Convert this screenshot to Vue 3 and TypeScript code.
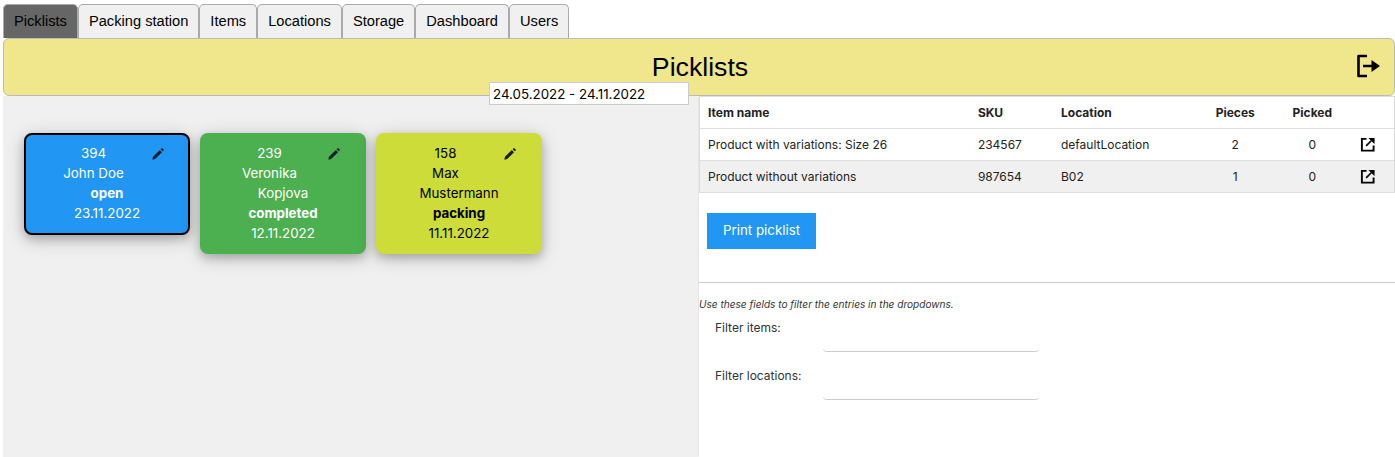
<script setup lang="ts">
interface Card {
  id: number
  name: string
  status: string
  date: string
  color: string
  active?: boolean
}

interface Row {
  name: string
  sku: string
  location: string
  pieces: number
  picked: number
}

const tabs = ['Picklists', 'Packing station', 'Items', 'Locations', 'Storage', 'Dashboard', 'Users']

const dateRange = '24.05.2022 - 24.11.2022'

const cards: Card[] = [
  { id: 394, name: 'John Doe', status: 'open', date: '23.11.2022', color: 'blue', active: true },
  { id: 239, name: 'Veronika Kopjova', status: 'completed', date: '12.11.2022', color: 'green' },
  { id: 158, name: 'Max Mustermann', status: 'packing', date: '11.11.2022', color: 'lime' }
]

const rows: Row[] = [
  { name: 'Product with variations: Size 26', sku: '234567', location: 'defaultLocation', pieces: 2, picked: 0 },
  { name: 'Product without variations', sku: '987654', location: 'B02', pieces: 1, picked: 0 }
]
</script>

<template>
  <div class="page">
    <!-- Tabs -->
    <div class="tabs">
      <button v-for="(tab, i) in tabs" :key="tab" class="tab" :class="{ selected: i === 0 }">{{ tab }}</button>
    </div>

    <!-- Header -->
    <div class="header">
      <h1>Picklists</h1>
      <svg class="logout" viewBox="0 0 24 24" width="24" height="24">
        <path d="M11 2H2.5V22H11" fill="none" stroke="#000" stroke-width="2.6" stroke-linejoin="round" />
        <path d="M7 10.7H15.5V6L24 12L15.5 18V13.3H7Z" fill="#000" />
      </svg>
    </div>

    <div class="main">
      <!-- Picklist cards -->
      <div class="left">
        <input class="range" type="text" :value="dateRange" />
        <div class="cards">
          <div v-for="c in cards" :key="c.id" class="card" :class="[c.color, { active: c.active }]">
            <span class="edit">
              <svg viewBox="0 0 24 24" width="16" height="16">
                <path d="M3.5 20.5l1-4.2L14.8 6l3.2 3.2L7.7 19.5zM16 4.8l1.3-1.3c.4-.4 1-.4 1.4 0l1.8 1.8c.4.4.4 1 0 1.4L19.2 8z" fill="#14202b" />
              </svg>
            </span>
            <div>{{ c.id }}</div>
            <div>{{ c.name }}</div>
            <div class="status">{{ c.status }}</div>
            <div>{{ c.date }}</div>
          </div>
        </div>
      </div>

      <!-- Detail panel -->
      <div class="right">
        <table class="items">
          <thead>
            <tr>
              <th class="col-name">Item name</th>
              <th class="col-sku">SKU</th>
              <th class="col-loc">Location</th>
              <th class="col-num">Pieces</th>
              <th class="col-num2">Picked</th>
              <th class="col-open"></th>
            </tr>
          </thead>
          <tbody>
            <tr v-for="r in rows" :key="r.sku">
              <td>{{ r.name }}</td>
              <td>{{ r.sku }}</td>
              <td>{{ r.location }}</td>
              <td class="center">{{ r.pieces }}</td>
              <td class="center">{{ r.picked }}</td>
              <td class="center">
                <svg class="open" viewBox="0 0 16 16" width="15" height="15">
                  <path d="M7 2H2V14.5H14.5V9" fill="none" stroke="#000" stroke-width="2" />
                  <path d="M6.5 9.5L12 4" fill="none" stroke="#000" stroke-width="1.8" />
                  <path d="M9 1H15.5V7.5Z" fill="#000" />
                </svg>
              </td>
            </tr>
          </tbody>
        </table>

        <button class="print">Print picklist</button>
        <hr />

        <p class="hint">Use these fields to filter the entries in the dropdowns.</p>
        <div class="filter">
          <label>Filter items:</label>
          <input type="text" />
        </div>
        <div class="filter">
          <label>Filter locations:</label>
          <input type="text" />
        </div>
      </div>
    </div>
  </div>
</template>

<style>
html,
body {
  margin: 0;
  background: #fff;
  overflow: hidden;
}
</style>

<style scoped>
.page {
  height: 457px;
  overflow: hidden;
  font-family: Inter, "Liberation Sans", sans-serif;
}

/* Tabs */
.tabs {
  display: flex;
  height: 34px;
  margin-top: 4px;
  padding-left: 3px;
}

.tab {
  padding: 0 10px 2px;
  font-family: "Liberation Sans", Arial, sans-serif;
  font-size: 14.67px;
  color: #000;
  background: #f0f0f0;
  border: 1px solid #aaa;
  border-bottom: none;
  border-radius: 5px 5px 0 0;
}

.tab.selected {
  background: #666;
}

/* Header */
.header {
  display: flex;
  justify-content: center;
  align-items: center;
  position: relative;
  box-sizing: border-box;
  height: 58px;
  margin-left: 3px;
  padding-left: 2px;
  background: #f0e68c;
  border: 1px solid #bbb;
  border-radius: 6px;
}

.header h1 {
  margin: 0;
  font-family: "Liberation Sans", Arial, sans-serif;
  font-size: 26.67px;
  font-weight: 400;
  color: #000;
}

.logout {
  position: absolute;
  top: 15px;
  right: 14px;
}

/* Main */
.main {
  display: flex;
  height: 361px;
}

.left {
  position: relative;
  box-sizing: border-box;
  width: 695px;
  margin-left: 3px;
  padding: 37px 21px 0;
  background: #f0f0f0;
}

.range {
  position: absolute;
  top: -14px;
  left: 486px;
  box-sizing: border-box;
  width: 200px;
  height: 23px;
  padding: 1px 3px;
  font-family: Inter, "Liberation Sans", sans-serif;
  font-size: 13.33px;
  color: #000;
  background: #fff;
  border: 1px solid #ccc;
}

.cards {
  display: flex;
  align-items: flex-start;
  gap: 10px;
}

.card {
  box-sizing: border-box;
  width: 166px;
  padding: 10px 24px 11px;
  font-size: 13.33px;
  line-height: 20px;
  text-align: center;
  color: #fff;
  border-radius: 8px;
  box-shadow: 0 4px 10px 0 rgba(0, 0, 0, 0.2), 0 4px 20px 0 rgba(0, 0, 0, 0.19);
}

.card.active {
  padding: 8px 22px 10px;
  border: 2px solid #000;
}

.blue {
  background: #2196f3;
}

.green {
  background: #4caf50;
}

.lime {
  background: #cddc39;
  color: #000;
}

.edit {
  float: right;
  display: flex;
  justify-content: flex-end;
  width: 27px;
  height: 40px;
  padding-top: 3px;
  box-sizing: border-box;
}

.status {
  font-weight: 700;
}

/* Detail panel */
.right {
  flex: 1;
  margin-left: 1px;
  background: #fff;
  box-shadow: -2px 0 3px rgba(0, 0, 0, 0.12);
  font-size: 12px;
}

.items {
  box-sizing: border-box;
  width: 100%;
  table-layout: fixed;
  border-collapse: collapse;
  border: 1px solid #ddd;
  color: #222;
}

.items th,
.items td {
  box-sizing: border-box;
  height: 32px;
  padding: 0 0 0 8px;
  text-align: left;
  border-top: 1px solid #ddd;
  border-bottom: 1px solid #ddd;
}

.items th {
  font-weight: 700;
}

.items tbody tr:nth-child(even) {
  background: #f0f0f0;
}

.col-name {
  width: 270px;
}

.col-sku {
  width: 83px;
}

.col-loc {
  width: 133px;
}

.items .col-num {
  width: 98px;
  padding: 0;
  text-align: center;
}

.items .col-num2 {
  width: 56px;
  padding: 0;
  text-align: center;
}

.col-open {
  width: 54px;
}

.items .center {
  padding: 0;
  text-align: center;
}

.open {
  display: block;
  margin: 0 auto;
}

.print {
  display: block;
  width: 109px;
  height: 36px;
  margin: 20px 0 33px 8px;
  padding: 0 0 2px;
  font-family: inherit;
  font-size: 13.33px;
  color: #fff;
  background: #2196f3;
  border: none;
}

hr {
  margin: 0;
  border: none;
  border-top: 1px solid #ccc;
}

.hint {
  margin: 15px 0 0;
  font-size: 10.08px;
  line-height: 12px;
  font-style: italic;
  color: #333;
}

.filter {
  display: flex;
  align-items: flex-start;
  height: 48px;
  padding-left: 16px;
  color: #333;
}

.filter label {
  width: 108px;
  padding-top: 10px;
  line-height: 15px;
}

.filter input {
  box-sizing: border-box;
  width: 216px;
  height: 30px;
  margin-top: 12px;
  background: transparent;
  border: none;
  border-bottom: 1px solid #ccc;
  border-radius: 4px;
  outline: none;
}
</style>
